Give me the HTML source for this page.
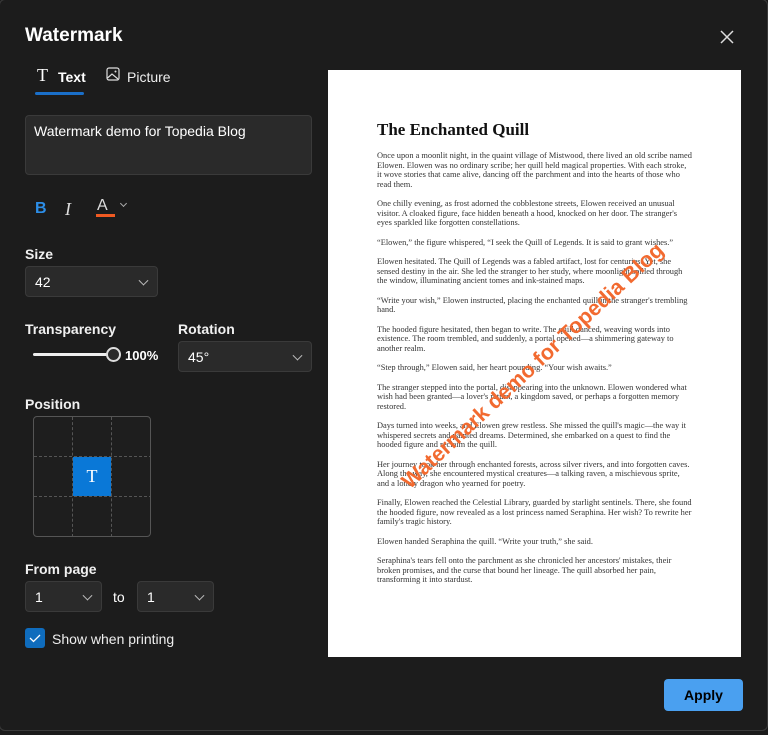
<!DOCTYPE html>
<html><head><meta charset="utf-8"><style>
*{box-sizing:border-box;margin:0;padding:0}
body{width:768px;height:735px;background:#1b1b1b;font-family:"Liberation Sans",sans-serif;color:#fff;position:relative;overflow:hidden}
.dlg{position:absolute;left:-1px;top:-1px;width:769px;height:732px;background:#1c1c1c;border:1px solid #3a3a3a;border-radius:6px}
.a{position:absolute}
.lbl{font-size:14px;font-weight:bold;color:#f0f0f0}
.sel{position:absolute;background:#2a2a2a;border:1px solid #3a3a3a;border-radius:4px;font-size:14px;color:#fff;padding-left:9px;display:flex;align-items:center}
.chev{position:absolute;right:10px;top:50%;width:7px;height:7px;border-right:1px solid #bbb;border-bottom:1px solid #bbb;transform:translateY(-70%) rotate(45deg)}
.page{position:absolute;left:328px;top:70px;width:413px;height:587px;background:#fff;overflow:hidden;color:#333;font-family:"Liberation Serif",serif}
.page h1{position:absolute;left:49px;top:50px;font-size:17px;font-weight:bold;color:#111}
.body{position:absolute;left:49px;top:81px;width:316px;font-size:8.4px;line-height:9.5px}
.body p{margin-bottom:10px}
.wm{position:absolute;left:205px;top:296px;transform:translate(-50%,-50%) rotate(-43deg);font-family:"Liberation Sans",sans-serif;font-weight:bold;font-size:21.5px;color:#f26a30;white-space:nowrap}
</style></head><body>
<div class="dlg">
<div class="a" style="left:25px;top:25px;font-size:19px;font-weight:bold">Watermark</div>
<div class="a" style="left:720px;top:30px;width:14px;height:14px">
<svg width="14" height="14"><path d="M1 1L13 13M13 1L1 13" stroke="#ddd" stroke-width="1.5"/></svg></div>
<div class="a" style="left:37px;top:65px;font-size:18px;font-family:'Liberation Serif',serif">T</div>
<div class="a" style="left:58px;top:69px;font-size:14px;font-weight:bold">Text</div>
<div class="a" style="left:35px;top:92px;width:49px;height:3px;background:#1a6fc9;border-radius:2px"></div>
<svg class="a" style="left:106px;top:67px" width="14" height="14"><rect x="1" y="1" width="12" height="12" rx="2" fill="none" stroke="#ddd" stroke-width="1.2"/><path d="M1.5 11L6 7L12 12" stroke="#ddd" fill="none" stroke-width="1.2"/><circle cx="9.5" cy="4.5" r="1" fill="#ddd"/></svg>
<div class="a" style="left:127px;top:69px;font-size:14px;color:#eee">Picture</div>
<div class="a" style="left:25px;top:115px;width:287px;height:60px;background:#2a2a2a;border:1px solid #3a3a3a;border-radius:4px;padding:7px 8px;font-size:14px">Watermark demo for Topedia Blog</div>
<div class="a" style="left:35px;top:200px;font-size:16px;font-weight:bold;color:#2c8ee8">B</div>
<div class="a" style="left:65px;top:199px;font-size:18px;font-style:italic;font-family:'Liberation Serif',serif;color:#ddd">I</div>
<div class="a" style="left:97px;top:197px;font-size:16px;color:#ddd">A</div>
<div class="a" style="left:96px;top:214px;width:19px;height:3px;background:#f05a22"></div>
<div class="a" style="left:121px;top:201px;width:5px;height:5px;border-right:1px solid #aaa;border-bottom:1px solid #aaa;transform:rotate(45deg)"></div>
<div class="a lbl" style="left:25px;top:246px">Size</div>
<div class="sel" style="left:25px;top:266px;width:133px;height:31px">42<div class="chev"></div></div>
<div class="a lbl" style="left:25px;top:321px">Transparency</div>
<div class="a" style="left:33px;top:353px;width:80px;height:3px;background:#eee;border-radius:2px"></div>
<div class="a" style="left:106px;top:347px;width:15px;height:15px;border-radius:50%;background:#2a2a2a;border:2px solid #ddd"></div>
<div class="a" style="left:125px;top:348px;font-size:13px;font-weight:bold">100%</div>
<div class="a lbl" style="left:178px;top:321px">Rotation</div>
<div class="sel" style="left:178px;top:341px;width:134px;height:31px">45°<div class="chev"></div></div>
<div class="a lbl" style="left:25px;top:396px">Position</div>
<div class="a" style="left:33px;top:416px;width:118px;height:121px;border:1px solid #555;border-radius:4px;background:#1e1e1e;overflow:hidden">
<div class="a" style="left:38px;top:0;height:120px;border-left:1px dashed #555"></div>
<div class="a" style="left:77px;top:0;height:120px;border-left:1px dashed #555"></div>
<div class="a" style="top:39px;left:0;width:118px;border-top:1px dashed #555"></div>
<div class="a" style="top:79px;left:0;width:118px;border-top:1px dashed #555"></div>
<div class="a" style="left:39px;top:40px;width:38px;height:39px;background:#0a78d7;text-align:center;line-height:39px;font-family:'Liberation Serif',serif;font-size:18px">T</div>
</div>
<div class="a lbl" style="left:25px;top:561px">From page</div>
<div class="sel" style="left:25px;top:581px;width:77px;height:31px">1<div class="chev"></div></div>
<div class="a" style="left:113px;top:589px;font-size:14px">to</div>
<div class="sel" style="left:137px;top:581px;width:77px;height:31px">1<div class="chev"></div></div>
<div class="a" style="left:25px;top:628px;width:20px;height:20px;background:#0f6cbd;border-radius:3px"><svg width="20" height="20"><path d="M5 10L8.5 13.5L15 7" stroke="#fff" stroke-width="1.3" fill="none"/></svg></div>
<div class="a" style="left:52px;top:631px;font-size:14px;color:#eee">Show when printing</div>
<div class="page">
<h1>The Enchanted Quill</h1>
<div class="body">
<p>Once upon a moonlit night, in the quaint village of Mistwood, there lived an old scribe named Elowen. Elowen was no ordinary scribe; her quill held magical properties. With each stroke, it wove stories that came alive, dancing off the parchment and into the hearts of those who read them.</p>
<p>One chilly evening, as frost adorned the cobblestone streets, Elowen received an unusual visitor. A cloaked figure, face hidden beneath a hood, knocked on her door. The stranger's eyes sparkled like forgotten constellations.</p>
<p>“Elowen,” the figure whispered, “I seek the Quill of Legends. It is said to grant wishes.”</p>
<p>Elowen hesitated. The Quill of Legends was a fabled artifact, lost for centuries. Yet, she sensed destiny in the air. She led the stranger to her study, where moonlight spilled through the window, illuminating ancient tomes and ink-stained maps.</p>
<p>“Write your wish,” Elowen instructed, placing the enchanted quill in the stranger's trembling hand.</p>
<p>The hooded figure hesitated, then began to write. The quill danced, weaving words into existence. The room trembled, and suddenly, a portal opened—a shimmering gateway to another realm.</p>
<p>“Step through,” Elowen said, her heart pounding. “Your wish awaits.”</p>
<p>The stranger stepped into the portal, disappearing into the unknown. Elowen wondered what wish had been granted—a lover's return, a kingdom saved, or perhaps a forgotten memory restored.</p>
<p>Days turned into weeks, and Elowen grew restless. She missed the quill's magic—the way it whispered secrets and painted dreams. Determined, she embarked on a quest to find the hooded figure and reclaim the quill.</p>
<p>Her journey took her through enchanted forests, across silver rivers, and into forgotten caves. Along the way, she encountered mystical creatures—a talking raven, a mischievous sprite, and a lonely dragon who yearned for poetry.</p>
<p>Finally, Elowen reached the Celestial Library, guarded by starlight sentinels. There, she found the hooded figure, now revealed as a lost princess named Seraphina. Her wish? To rewrite her family's tragic history.</p>
<p>Elowen handed Seraphina the quill. “Write your truth,” she said.</p>
<p>Seraphina's tears fell onto the parchment as she chronicled her ancestors' mistakes, their broken promises, and the curse that bound her lineage. The quill absorbed her pain, transforming it into stardust.</p>
</div>
<div class="wm">Watermark demo for Topedia Blog</div>
</div>
<div class="a" style="left:664px;top:679px;width:79px;height:32px;background:#4aa0f0;border-radius:4px;color:#000;font-size:14px;font-weight:bold;text-align:center;line-height:32px">Apply</div>
</div>
</body></html>
